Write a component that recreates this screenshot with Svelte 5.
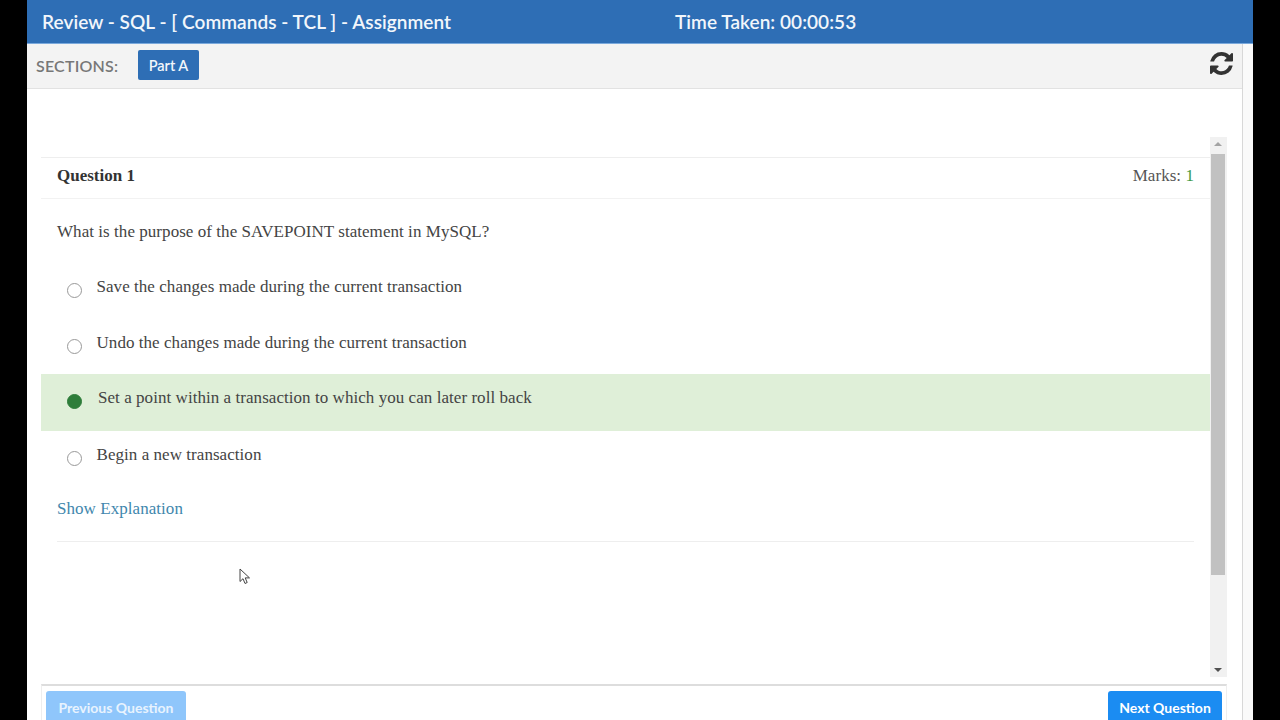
<script>
  const options = [
    { text: 'Save the changes made during the current transaction', selected: false },
    { text: 'Undo the changes made during the current transaction', selected: false },
    { text: 'Set a point within a transaction to which you can later roll back', selected: true },
    { text: 'Begin a new transaction', selected: false }
  ];
</script>

<div class="frame">
  <div class="app">
    <header class="top">
      <div class="title">Review - SQL - [ Commands - TCL ] - Assignment</div>
      <div class="time">Time Taken: 00:00:53</div>
    </header>
    <div class="below">
      <div class="page">
        <div class="sections">
          <span class="label">SECTIONS:</span>
          <span class="part">Part A</span>
          <svg class="refresh" viewBox="0 0 1536 1536" width="23" height="23" aria-hidden="true">
            <path fill="#333" d="M1511 928q0 5-1 7-64 268-268 434.500t-478 166.500q-146 0-282.500-55t-243.500-157l-129 129q-19 19-45 19t-45-19-19-45v-448q0-26 19-45t45-19h448q26 0 45 19t19 45-19 45l-137 137q71 66 161 102t187 36q134 0 250-65t186-179q11-17 53-117 8-23 30-23h192q13 0 22.500 9.500t9.500 22.500zm25-800v448q0 26-19 45t-45 19h-448q-26 0-45-19t-19-45 19-45l138-138q-148-137-349-137-134 0-250 65t-186 179q-11 17-53 117-8 23-30 23h-199q-13 0-22.500-9.500t-9.500-22.500v-7q65-268 270-434.500t480-166.500q146 0 284 55.500t245 156.500l130-129q19-19 45-19t45 19 19 45z"/>
          </svg>
        </div>
        <main class="main">
          <div class="scroller">
            <div class="content">
              <div class="qhead">
                <strong>Question 1</strong>
                <span class="marks">Marks: <em>1</em></span>
              </div>
              <p class="qtext">What is the purpose of the SAVEPOINT statement in MySQL?</p>
              <div class="options">
                {#each options as o}
                  <div class="option" class:selected={o.selected}>
                    <span class="radio"></span>
                    <span class="otext">{o.text}</span>
                  </div>
                {/each}
              </div>
              <div class="explain">Show Explanation</div>
              <div class="rule"></div>
              <svg class="cursor" width="12" height="17" viewBox="0 0 12 17" aria-hidden="true">
                <path d="M1 1v12.500l3-2.800 2 4.800 2.200-1-2-4.600h4.300z" fill="#fff" stroke="#444" stroke-width="1"/>
              </svg>
            </div>
            <div class="bar">
              <span class="up"></span>
              <span class="thumb"></span>
              <span class="down"></span>
            </div>
          </div>
          <footer class="foot">
            <button class="prev">Previous Question</button>
            <button class="next">Next Question</button>
          </footer>
        </main>
      </div>
      <div class="outerbar"></div>
    </div>
  </div>
</div>

<style>
  :global(html), :global(body) {
    margin: 0;
    height: 720px;
    overflow: hidden;
    background: #000;
  }
  .frame {
    height: 720px;
    overflow: hidden;
    padding: 0 27px;
    box-sizing: border-box;
  }
  .app {
    background: #fff;
    height: 720px;
    display: flex;
    flex-direction: column;
  }
  .top {
    height: 44px;
    box-sizing: border-box;
    flex: none;
    background: #2e6eb5;
    border-bottom: 1px solid #7aa9dc;
    color: #f2f6fb;
    font: 600 19px Lato, sans-serif;
    letter-spacing: 0.05px;
    display: flex;
    align-items: center;
    padding-left: 15px;
  }
  .title { width: 633px; }
  .below { flex: 1; display: flex; min-height: 0; }
  .page { flex: 1; min-width: 0; display: flex; flex-direction: column; }
  .outerbar {
    width: 10px;
    flex: none;
    background: #fafafa;
    border-left: 1px solid #d8d8d8;
  }
  .sections {
    height: 45px;
    flex: none;
    box-sizing: border-box;
    background: #f3f3f3;
    border-bottom: 1px solid #e2e2e2;
    display: flex;
    align-items: center;
    padding-left: 9px;
    font-family: Lato, sans-serif;
    font-weight: 600;
  }
  .label { color: #777; font-size: 16px; width: 102px; letter-spacing: 0.2px; margin-top: -2px; }
  .part {
    width: 61px;
    height: 30px;
    background: #2e6eb5;
    color: #f2f6fb;
    font-size: 14.5px;
    border-radius: 2px;
    display: flex;
    align-items: center;
    justify-content: center;
    margin-top: -2px;
  }
  .refresh { margin-left: auto; margin-right: 9px; margin-top: -6px; }
  .main {
    flex: 1;
    min-height: 0;
    display: flex;
    flex-direction: column;
    padding: 48px 15px 0 14px;
    font-family: "Liberation Serif", serif;
    font-size: 17px;
    letter-spacing: 0.05px;
    color: #444;
  }
  .scroller { height: 540px; flex: none; display: flex; }
  .content {
    flex: 1;
    min-width: 0;
    padding-top: 20px;
    position: relative;
  }
  .qhead {
    height: 42px;
    box-sizing: border-box;
    border-top: 1px solid #eee;
    border-bottom: 1px solid #f2f2f2;
    display: flex;
    align-items: center;
    justify-content: space-between;
    padding: 0 16px 5px;
  }
  .qhead strong { color: #333; letter-spacing: 0; }
  .marks { color: #555; }
  .marks em { font-style: normal; color: #3c9a46; }
  .qtext { margin: 0; height: 63px; padding: 24px 16px 0; box-sizing: border-box; line-height: 18px; }
  .option {
    height: 56px;
    box-sizing: border-box;
    padding: 15px 16px 0 25.5px;
    display: flex;
    align-items: flex-start;
    line-height: 18px;
  }
  .option.selected { background: #dfefd8; padding-left: 26px; height: 57px; margin-bottom: -1px; }
  .radio {
    width: 15px;
    height: 15px;
    flex: none;
    box-sizing: border-box;
    border: 1.5px solid #999;
    border-radius: 50%;
    margin: 5.5px 8px 0 0;
    background: #fff;
  }
  .option.selected .radio { background: #2e7d3a; border-color: #2e7d3a; margin-top: 4.5px; }
  .otext { margin-left: 7px; margin-top: 1px; }
  .option.selected .otext { margin-left: 8px; margin-top: 0; }
  .explain { color: #3f87ad; padding: 14px 16px 0; height: 55px; box-sizing: border-box; line-height: 18px; }
  .rule { height: 1px; background: #eee; margin: 0 16px; }
  .cursor { position: absolute; left: 198px; top: 431px; }
  .bar {
    width: 17px;
    flex: none;
    background: #f1f1f1;
    position: relative;
    display: flex;
    flex-direction: column;
  }
  .thumb { position: absolute; top: 17px; left: 1px; right: 2px; height: 421px; background: #c1c1c1; }
  .up, .down { position: absolute; left: 4px; width: 0; height: 0; border: 4px solid transparent; }
  .up { top: 5px; border-bottom-color: #a3a3a3; border-top: 0; }
  .down { bottom: 5px; border-top-color: #505050; border-bottom: 0; }
  .foot {
    flex: none;
    margin-top: 7px;
    height: 60px;
    border-top: 2px solid #ddd;
    border-left: 1px solid #eee;
    border-right: 1px solid #eee;
    display: flex;
    justify-content: space-between;
    padding: 5px 4px 0;
  }
  button {
    border: 0;
    height: 36px;
    border-radius: 3px;
    font: 700 14px Lato, sans-serif;
    color: #fff;
    padding: 0 0 3px;
    width: 140px;
  }
  .prev { background: #8fc6fb; color: #e8f3fe; }
  .next { background: #1b8cf2; width: 114px; }
</style>
